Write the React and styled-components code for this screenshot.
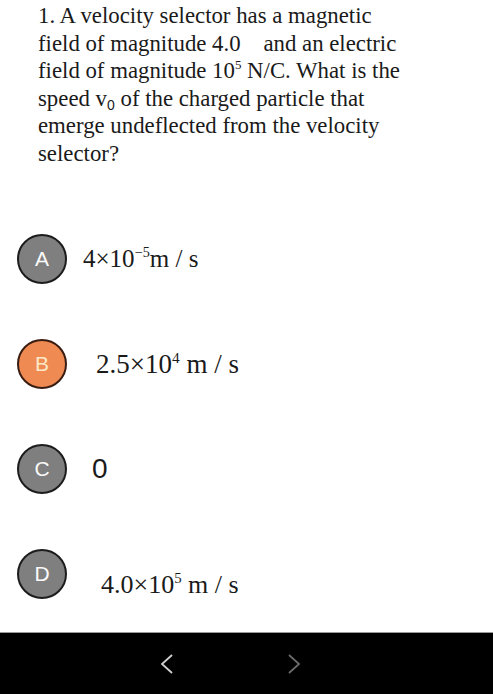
import React from "react";
import styled, { createGlobalStyle } from "styled-components";

const GlobalStyle = createGlobalStyle`
  html, body {
    margin: 0;
    padding: 0;
    background: #fff;
  }
`;

const Page = styled.div`
  display: flex;
  flex-direction: column;
  min-height: 100vh;
  width: 493px;
  overflow: hidden;
`;

const Question = styled.p`
  margin: 0;
  padding: 2px 0 0 38px;
  font-family: "Liberation Serif", "Times New Roman", serif;
  font-size: 22.8px;
  line-height: 27.6px;
  color: #1a1a1a;
`;

const Sup = styled.sup`
  font-size: 0.57em;
  line-height: 0;
  vertical-align: 0.68em;
`;

const Sub = styled.sub`
  font-family: "Liberation Sans", Arial, sans-serif;
  font-size: 14px;
  line-height: 0;
  vertical-align: -4px;
`;

const Options = styled.div`
  display: flex;
  flex-direction: column;
  gap: 55px;
  margin-top: 66px;
  padding-left: 17px;
`;

const Row = styled.div`
  display: flex;
  align-items: center;
  height: 50px;
`;

const Circle = styled.div`
  box-sizing: border-box;
  width: 50px;
  height: 50px;
  flex: none;
  border-radius: 50%;
  border: 2px solid ${(p) => (p.$active ? "#3a1d12" : "#1c1c1c")};
  background: ${(p) => (p.$active ? "#ef8a53" : "#7f7f7f")};
  color: ${(p) => (p.$active ? "#fde9c6" : "#fafafa")};
  display: flex;
  align-items: center;
  justify-content: center;
  font-family: "Liberation Sans", Arial, sans-serif;
  font-size: 21px;
`;

const Answer = styled.div`
  margin-left: ${(p) => p.$gap}px;
  transform: translateY(${(p) => p.$shift || 0}px);
  font-family: ${(p) =>
    p.$sans
      ? '"Liberation Sans", Arial, sans-serif'
      : '"Liberation Serif", "Times New Roman", serif'};
  font-size: ${(p) => p.$size}px;
  color: #1a1a1a;
  white-space: nowrap;
`;

const NavBar = styled.nav`
  margin-top: auto;
  height: 61px;
  background: #000;
  border-top: 1px solid #9a9a9a;
  display: flex;
  align-items: center;
  justify-content: center;
  gap: 115px;
  padding-right: 33px;
`;

const Chevron = ({ dir, color }) => (
  <svg width="13" height="20" viewBox="0 0 13 20">
    <path
      d={dir === "left" ? "M12 1 L2 10 L12 19" : "M1 1 L11 10 L1 19"}
      fill="none"
      stroke={color}
      strokeWidth="1.8"
    />
  </svg>
);

const App = () => (
  <Page>
    <GlobalStyle />
    <Question>
      1. A velocity selector has a magnetic
      <br />
      field of magnitude 4.0{"\u00a0\u00a0\u00a0"} and an electric
      <br />
      field of magnitude 10<Sup>5</Sup> N/C. What is the
      <br />
      speed v<Sub>0</Sub> of the charged particle that
      <br />
      emerge undeflected from the velocity
      <br />
      selector?
    </Question>
    <Options>
      <Row>
        <Circle>A</Circle>
        <Answer $gap={16} $size={25}>
          4×10<Sup>−5</Sup>m / s
        </Answer>
      </Row>
      <Row>
        <Circle $active>B</Circle>
        <Answer $gap={29} $size={27} $shift={1}>
          2.5×10<Sup>4</Sup> m / s
        </Answer>
      </Row>
      <Row>
        <Circle>C</Circle>
        <Answer $gap={25} $size={28} $sans>
          0
        </Answer>
      </Row>
      <Row>
        <Circle>D</Circle>
        <Answer $gap={34} $size={26} $shift={11}>
          4.0×10<Sup>5</Sup> m / s
        </Answer>
      </Row>
    </Options>
    <NavBar>
      <Chevron dir="left" color="#d0d0d0" />
      <Chevron dir="right" color="#6a6a6a" />
    </NavBar>
  </Page>
);

export default App;
